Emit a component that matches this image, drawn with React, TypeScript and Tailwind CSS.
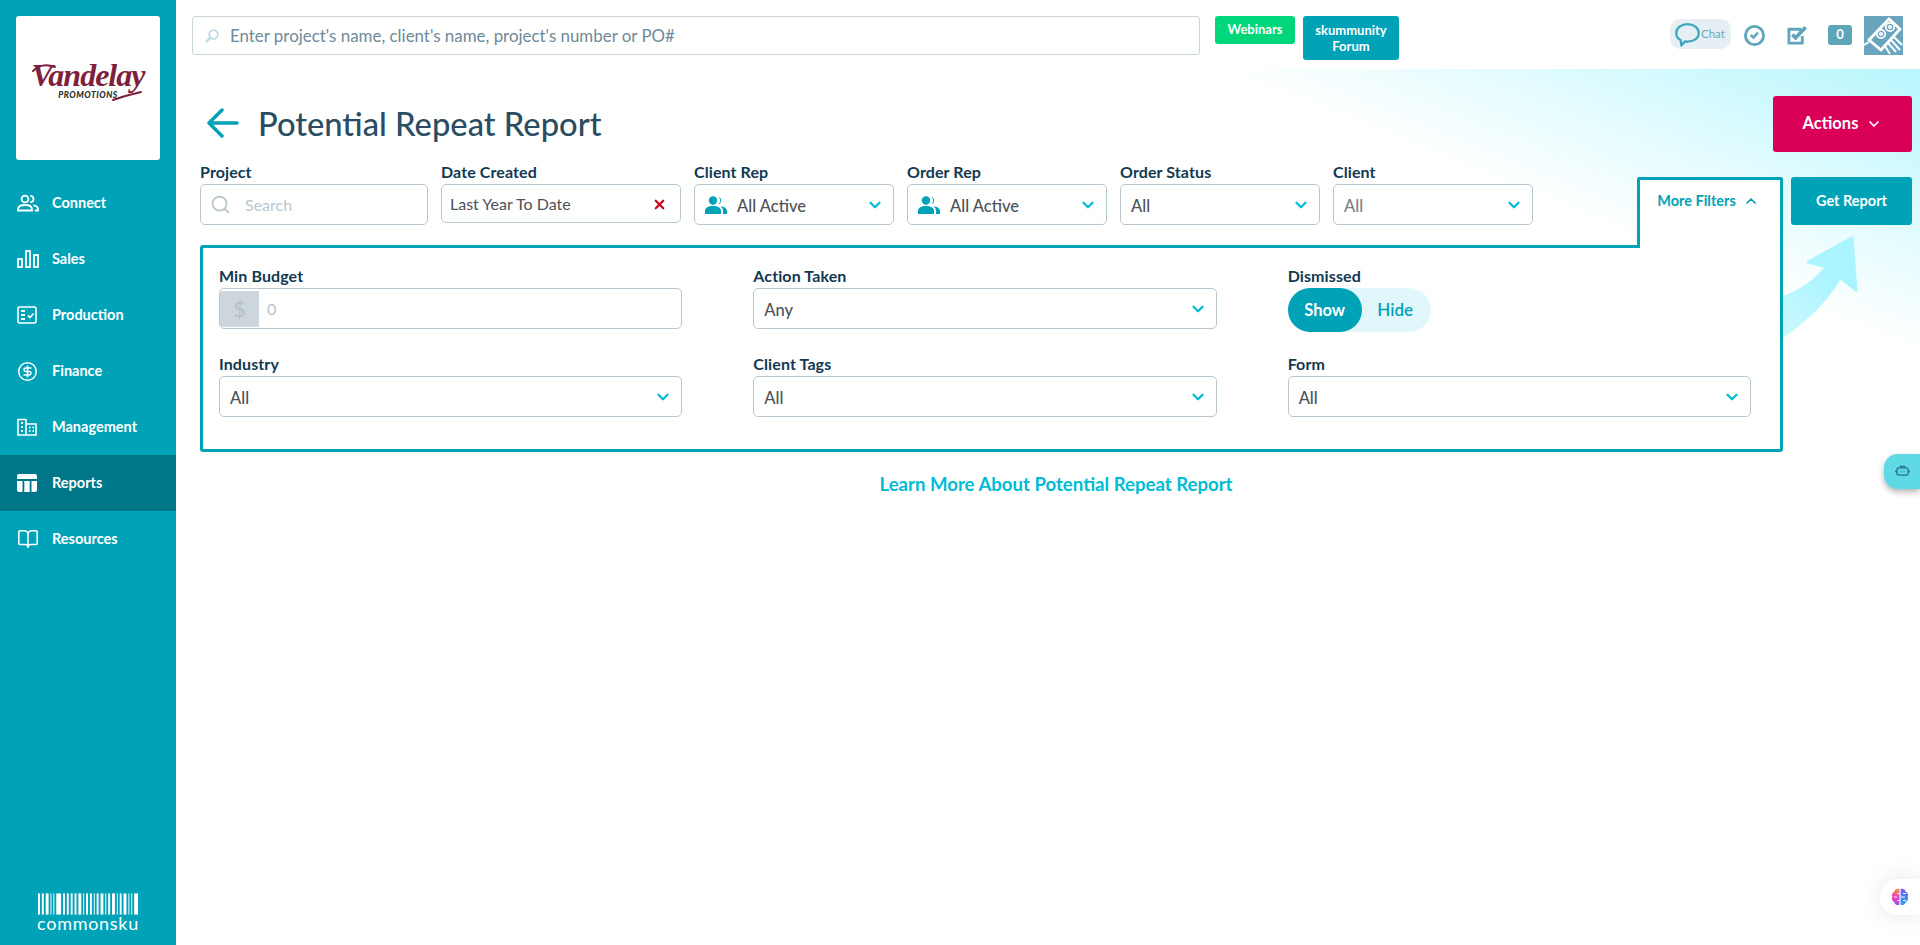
import React from 'react';
import { Search, ChevronDown, ChevronUp, CircleDollarSign, BookOpen, X } from 'lucide-react';

const UsersOutline = () => (
  <svg viewBox="0 0 22 18" className="h-[18px] w-[22px]" fill="none" stroke="currentColor" strokeWidth={1.8} strokeLinecap="round">
    <circle cx="8" cy="5" r="3.4" />
    <path d="M1 16.5v-1.2c0-2.6 2.4-4.3 7-4.3s7 1.700 7 4.300v1.200z" />
    <path d="M14 1.800a3.300 3.300 0 0 1 0 6.400" />
    <path d="M17 11.300c2.600.5 4 1.900 4 4v1.200h-2.500" />
  </svg>
);

const BarsOutline = () => (
  <svg viewBox="0 0 22 18" className="h-[18px] w-[22px]" fill="none" stroke="currentColor" strokeWidth={1.8}>
    <rect x="1" y="9" width="4" height="8" />
    <rect x="9" y="1" width="4" height="16" />
    <rect x="17" y="5" width="4" height="12" />
  </svg>
);

const ProductionIcon = () => (
  <svg viewBox="0 0 20 18" className="h-[18px] w-[20px]" fill="none" stroke="currentColor" strokeWidth={1.6}>
    <rect x="1" y="1" width="18" height="16" rx="1.500" />
    <path d="M4 5h4M4 9h4M4 13h4" strokeWidth={1.800} />
    <path d="M11 9.500l2 2 3.500-4" strokeWidth={1.800} />
  </svg>
);

const BuildingIcon = () => (
  <svg viewBox="0 0 20 18" className="h-[18px] w-[20px]" fill="none" stroke="currentColor" strokeWidth={1.600}>
    <path d="M1 17V1.500h8V17zM9 6h10v11H1" />
    <path d="M4 5h2M4 9h2M4 13h2M12 9.500h1.500M15.500 9.500H17M12 13h1.500M15.500 13H17" strokeWidth={1.800} />
  </svg>
);

const TableIcon = () => (
  <svg viewBox="0 0 20 18" className="h-[18px] w-[20px]" fill="currentColor">
    <path d="M2 0h16a2 2 0 0 1 2 2v3H0V2a2 2 0 0 1 2-2z" />
    <path d="M0 7h5.500v11H2a2 2 0 0 1-2-2zM7.300 7h5.400v11H7.300zM14.500 7H20v9a2 2 0 0 1-2 2h-3.500z" />
  </svg>
);

const PeopleFilled = () => (
  <svg viewBox="0 0 22 18" className="h-[18px] w-[22px] shrink-0" fill="#00a2b8">
    <circle cx="8" cy="4.500" r="4.200" />
    <path d="M0 18v-3c0-3.300 3.300-5 8-5s8 1.700 8 5v3z" />
    <path d="M13.500.600a4.200 4.200 0 0 1 0 7.800 6 6 0 0 0 0-7.800z" />
    <path d="M15.500 10.300c3.800.4 6.500 2 6.500 4.700v3h-4v-3.200c0-1.800-1-3.300-2.500-4.500z" />
  </svg>
);

const navItems = [
  { label: 'Connect', icon: <UsersOutline /> },
  { label: 'Sales', icon: <BarsOutline /> },
  { label: 'Production', icon: <ProductionIcon /> },
  { label: 'Finance', icon: <CircleDollarSign size={21} strokeWidth={1.700} /> },
  { label: 'Management', icon: <BuildingIcon /> },
  { label: 'Reports', icon: <TableIcon />, active: true },
  { label: 'Resources', icon: <BookOpen size={22} strokeWidth={1.700} /> },
];

// widths of the white bars in the logo, drawn left to right
const barcode = [2, 2, 3, 1, 1, 5, 2, 2, 2, 2, 3, 1, 2, 2, 1, 2, 3, 1, 2, 3, 1, 2, 3, 1, 1, 4];

const Barcode = () => {
  let x = 0;
  return (
    <svg viewBox="0 0 104 22" className="h-[22px] w-[100px]" fill="#fff">
      {barcode.map((w, i) => {
        const bar = <rect key={i} x={x} y="0" width={w} height="22" />;
        x += w + 2;
        return bar;
      })}
    </svg>
  );
};

const Label: React.FC<{ children: React.ReactNode }> = ({ children }) => (
  <div className="h-[22px] text-[16px] leading-[20px] font-bold tracking-[0.1px] text-[#123952]">{children}</div>
);

const SelectBox: React.FC<{ value: string; people?: boolean; muted?: boolean }> = ({ value, people, muted }) => (
  <div className="flex h-[41px] items-center rounded-[5px] border border-[#b8c7cf] bg-white pr-[9px] pl-[10px]">
    {people && <span className="mr-[10px]"><PeopleFilled /></span>}
    <span className={`pt-[3px] text-[16.5px] font-medium ${muted ? 'text-[#7a8287]' : 'text-[#4d5257]'}`}>{value}</span>
    <ChevronDown size={18} strokeWidth={3} className="ml-auto text-[#00bcd4]" />
  </div>
);

const App: React.FC = () => {
  return (
    <div className="flex h-[945px] w-full overflow-hidden bg-white font-['Lato',sans-serif]">
      <aside className="flex w-[176px] shrink-0 flex-col bg-[#00a2b8] text-white">
        <div className="relative mx-4 mt-4 mb-[15px] flex h-[144px] flex-col items-center justify-center rounded-[3px] bg-white pb-[17px]">
          <div className="font-['Liberation_Serif',serif] text-[32px] leading-[31px] font-bold tracking-[-1px] text-[#7d1f3d] italic">Vandelay</div>
          <div className="text-[8.5px] leading-[9px] font-black tracking-[0.5px] text-[#2d2d2d] italic">PROMOTIONS</div>
          <svg viewBox="0 0 112 44" className="absolute top-[43px] left-[15px] h-[44px] w-[112px]" fill="none" stroke="#7d1f3d" strokeWidth={2} strokeLinecap="round">
            <path d="M2 12C8 6 16 5 24 8" />
            <path d="M110 33c-8 2-18 4-28 8" />
          </svg>
        </div>
        <nav className="flex flex-col">
          {navItems.map((item) => (
            <div key={item.label} className={`flex h-[56px] items-center pr-2 pl-[17px] ${item.active ? 'bg-[#007689]' : ''}`}>
              <span className="flex w-[35px] shrink-0 items-center">{item.icon}</span>
              <span className="-mt-[1px] text-[14.5px] font-bold">{item.label}</span>
            </div>
          ))}
        </nav>
        <div className="mt-auto mb-[15px] flex flex-col items-center">
          <Barcode />
          <div className="mt-[1px] text-[18px] leading-[14px] tracking-[0.7px]">commonsku</div>
        </div>
      </aside>

      <div className="flex min-w-0 flex-1 flex-col">
        <header className="flex h-[69px] shrink-0 items-start bg-white pt-4 pr-[17px] pl-4">
          <div className="flex h-[39px] w-[1008px] items-center rounded-[3px] border border-[#c9d6dd] pl-[12px]">
            <svg viewBox="0 0 14 14" className="mr-[11px] h-[14px] w-[14px]" fill="none" stroke="#b9d8e4" strokeWidth={1.800}>
              <circle cx="8.500" cy="5.500" r="4.300" />
              <path d="M5.300 8.700L1 13" strokeWidth={2.200} />
            </svg>
            <span className="text-[16.9px] text-[#6f8a99]">Enter project's name, client's name, project's number or PO#</span>
          </div>
          <div className="ml-[15px] flex h-[28px] w-[80px] items-center justify-center rounded-[3px] bg-[#00d67a] text-[13px] font-bold text-white">Webinars</div>
          <div className="ml-[8px] flex h-[44px] w-[96px] items-center justify-center rounded-[3px] bg-[#00a2b8] text-center text-[13px] leading-[16px] font-bold text-white">skummunity<br />Forum</div>
          <div className="mt-[3px] ml-[271px] flex h-[30px] w-[61px] items-center rounded-[10px] bg-[#e6eff3] pl-[5px]">
            <svg viewBox="0 0 24 24" className="h-[25px] w-[25px]" fill="none" stroke="#3ea7be" strokeWidth={2.200} strokeLinejoin="round">
              <path d="M5.500 17.500C2.800 16 1.200 13.500 1.200 10.800c0-5 5-8.800 10.800-8.800s10.800 3.800 10.800 8.800-5 8-10.800 8c-.8 0-1.500 0-2.300-.2L6 22.500z" />
            </svg>
            <span className="ml-[1px] text-[11.5px] text-[#6ba7bd]">Chat</span>
          </div>
          <svg viewBox="0 0 22 22" className="mt-[9px] ml-[13px] h-[21px] w-[21px]" fill="none" stroke="#5fa5bb" strokeWidth={3}>
            <circle cx="11" cy="11" r="9.500" />
            <path d="M7 10.500l3 2.500 4.500-5" strokeWidth={2.600} />
          </svg>
          <svg viewBox="0 0 22 20" className="mt-[9px] ml-[22px] h-[20px] w-[21px]" fill="none" stroke="#5fa5bb" strokeWidth={3}>
            <path d="M15 4H2v14.500h14V11" />
            <path d="M5.500 9.500l3.500 3.500L19.500 2" strokeWidth={3.800} />
          </svg>
          <div className="mt-[9px] ml-[20px] flex h-[20px] w-[24px] items-center justify-center rounded-[3px] bg-[#5ea5b8] text-[13px] font-bold text-white">0</div>
          <svg viewBox="0 0 39 39" className="ml-[12px] h-[39px] w-[39px] bg-[#6aa5bf]" fill="none" stroke="#fff" strokeWidth={1.500}>
            <path d="M5 24L25 3l11 10-19 21z" strokeWidth={2.800} />
            <circle cx="17" cy="18" r="4.200" strokeWidth={1.800} />
            <circle cx="26" cy="11" r="4.200" strokeWidth={1.800} />
            <circle cx="17" cy="18" r="1.300" />
            <circle cx="26" cy="11" r="1.300" />
            <path d="M5 26l-5 3M24 27l8 9M27 24l9 10M30 21l8 8M21 30l5 8" strokeWidth={2} />
          </svg>
        </header>

        <main className="relative flex-1 bg-[linear-gradient(22deg,#ffffff_82%,#b8f6fd_100%)] pr-2 pl-6">
          <svg viewBox="0 0 100 115" className="absolute top-[161px] right-[50px] h-[115px] w-[100px]">
            <defs>
              <linearGradient id="arrowFill" x1="1" y1="0" x2="0" y2="1">
                <stop offset="0.3" stopColor="#a9f4ff" />
                <stop offset="1" stopColor="#d3f9fe" />
              </linearGradient>
            </defs>
            <path d="M82 8L38 32l19 5C42 55 22 66 0 72v43c28-18 55-40 70-68l16 13z" fill="url(#arrowFill)" stroke="url(#arrowFill)" strokeWidth={3} strokeLinejoin="round" />
          </svg>

          <div className="relative flex h-[93px] items-center justify-between pt-[16px]">
            <div className="flex items-center">
              <svg viewBox="0 0 32 30" className="ml-[7px] h-[30px] w-[32px]" fill="none" stroke="#00a2b8" strokeWidth={3.500} strokeLinecap="round" strokeLinejoin="round">
                <path d="M30 15H2M15 2L2 15l13 13" />
              </svg>
              <h1 className="ml-[19px] pt-[1px] text-[32.7px] font-medium text-[#2a4d63]">Potential Repeat Report</h1>
            </div>
            <button className="flex h-[56px] w-[139px] items-center justify-center rounded-[3px] bg-[#db0057] text-[16.5px] font-bold text-white">
              Actions
              <ChevronDown size={16} strokeWidth={2.500} className="ml-[8px]" />
            </button>
          </div>

          <div className="relative flex h-[83px] items-start">
            <div className="w-[228px]">
              <Label>Project</Label>
              <div className="flex h-[41px] items-center rounded-[5px] border border-[#b8c7cf] bg-white pl-[9px]">
                <Search size={21} strokeWidth={1.800} className="text-[#b5c4cc]" />
                <span className="ml-[14px] text-[16px] text-[#b8c7cf]">Search</span>
              </div>
            </div>
            <div className="ml-[13px] w-[240px]">
              <Label>Date Created</Label>
              <div className="flex h-[39px] items-center rounded-[5px] border border-[#b8c7cf] bg-white pr-[13px] pl-[8px]">
                <span className="text-[16px] text-[#4d5257]">Last Year To Date</span>
                <X size={15} strokeWidth={3.500} className="mt-[2px] ml-auto text-[#d0021b]" />
              </div>
            </div>
            <div className="ml-[13px] w-[200px]">
              <Label>Client Rep</Label>
              <SelectBox value="All Active" people />
            </div>
            <div className="ml-[13px] w-[200px]">
              <Label>Order Rep</Label>
              <SelectBox value="All Active" people />
            </div>
            <div className="ml-[13px] w-[200px]">
              <Label>Order Status</Label>
              <SelectBox value="All" />
            </div>
            <div className="ml-[13px] w-[200px]">
              <Label>Client</Label>
              <SelectBox value="All" muted />
            </div>
            <div className="relative z-10 mt-[15px] ml-auto flex h-[71px] w-[146px] items-start justify-center rounded-t-[3px] border-[3px] border-b-0 border-[#00a2b8] bg-white pt-[10px] pr-[4px] text-[14.5px] font-bold text-[#00a2b8]">
              More Filters
              <ChevronUp size={16} strokeWidth={2.500} className="mt-[3px] ml-[7px]" />
            </div>
            <div className="mt-[15px] ml-2 flex h-[48px] w-[121px] items-center justify-center rounded-[3px] bg-[#00a2b8] text-[14.5px] font-bold text-white">Get Report</div>
          </div>

          <div className="relative mr-[129px] grid h-[207px] grid-cols-3 content-start gap-x-[71px] gap-y-[22px] rounded-[3px] border-[3px] border-[#00a2b8] bg-white pt-[18px] pr-[29px] pl-4">
            <div>
              <Label>Min Budget</Label>
              <div className="flex h-[41px] items-center rounded-[5px] border border-[#b8c7cf] bg-white">
                <div className="flex h-[36px] w-[39px] items-center justify-center rounded-l-[3px] bg-[#ced6dd] text-[21px] text-[#b3c1c9]">$</div>
                <span className="ml-[8px] text-[16px] text-[#b8c4cc]">0</span>
              </div>
            </div>
            <div>
              <Label>Action Taken</Label>
              <SelectBox value="Any" />
            </div>
            <div>
              <Label>Dismissed</Label>
              <div className="flex h-[44px] w-[143px] items-center rounded-full bg-[#e1f7fb] font-bold">
                <div className="flex h-[44px] w-[74px] items-center justify-center rounded-full bg-[#00a2b8] text-[16.5px] text-white">Show</div>
                <div className="flex-1 pr-[2px] text-center text-[17px] font-semibold text-[#00a2b8]">Hide</div>
              </div>
            </div>
            <div>
              <Label>Industry</Label>
              <SelectBox value="All" />
            </div>
            <div>
              <Label>Client Tags</Label>
              <SelectBox value="All" />
            </div>
            <div>
              <Label>Form</Label>
              <SelectBox value="All" />
            </div>
          </div>

          <div className="relative mt-[19px] text-center text-[18.6px] font-bold text-[#00bcd4]">Learn More About Potential Repeat Report</div>

          <div className="absolute top-[385px] right-0 flex h-[35px] w-[36px] items-center justify-center rounded-l-[14px] bg-[#5fd9e3] shadow-[0_3px_6px_rgba(0,0,0,0.3)]">
            <svg viewBox="0 0 16 14" className="h-[13px] w-[15px]" fill="none" stroke="#2a6f8f" strokeWidth={1.400}>
              <rect x="2" y="3" width="12" height="8" rx="2" />
              <path d="M0 7h2M14 7h2M5 1.500h6M6 7h.8M9.200 7h.8" />
            </svg>
          </div>

          <div className="absolute right-0 bottom-[30px] flex h-[36px] w-[40px] items-center rounded-l-[18px] bg-white pl-[11px] shadow-[0_0_24px_rgba(0,0,0,0.1)]">
            <svg viewBox="0 0 18 18" className="h-[18px] w-[18px]">
              <defs>
                <linearGradient id="brainLeft" x1="0" y1="0" x2="0" y2="1">
                  <stop offset="0" stopColor="#f58a3c" />
                  <stop offset="0.5" stopColor="#e83fc4" />
                  <stop offset="1" stopColor="#a44df0" />
                </linearGradient>
                <linearGradient id="brainRight" x1="0" y1="0" x2="0" y2="1">
                  <stop offset="0" stopColor="#7a5cf5" />
                  <stop offset="1" stopColor="#27a4f2" />
                </linearGradient>
              </defs>
              <path d="M8.400 1C5.500.4 3.600 2 3.300 3.800 1.300 4.600.300 7 1.300 9 .300 11 1.300 13.500 3.300 14c.3 2.300 2.800 3.800 5.100 2.800z" fill="url(#brainLeft)" />
              <path d="M9.600 1c2.900-.6 4.800 1 5.100 2.800 2 .8 3 3.200 2 5.200 1 2 0 4.500-2 5-.3 2.300-2.800 3.800-5.100 2.800z" fill="url(#brainRight)" />
              <path d="M3 9h3M6 5.500h2M6 12.500h2M12 5.500h3M10 9h4M12 12.500h3" stroke="#fff" strokeWidth={0.900} />
            </svg>
          </div>
        </main>
      </div>
    </div>
  );
};

export default App;
